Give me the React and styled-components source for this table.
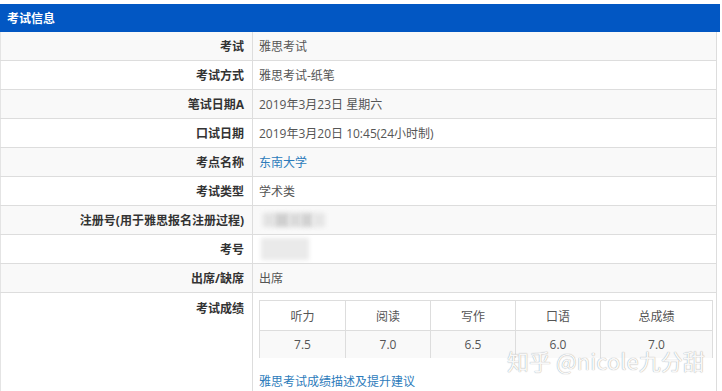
import React from "react"
import styled, { createGlobalStyle } from 'styled-components'

const GlobalStyle = createGlobalStyle`
  body {
    margin: 0;
    background: #fff;
    font-family: "Open Sans", "Noto Sans CJK SC", sans-serif;
    font-size: 12px;
  }
`

const Page = styled.div`
  padding-top: 4px;
  width: 722px;
  height: 387px;
  overflow: hidden;
  position: relative;
`

const PanelHeader = styled.div`
  height: 28px;
  width: 720px;
  background: #0257c3;
  color: #fff;
  font-weight: bold;
  display: flex;
  align-items: center;
  padding-left: 7px;
  box-sizing: border-box;
`

const InfoTable = styled.table`
  width: 717px;
  border-collapse: collapse;
  table-layout: fixed;
  border-left: 1px solid #e4e4e4;
  border-right: 1px solid #ddd;
`

const Row = styled.tr`
  background: ${p => p.$striped ? '#f9f9f9' : '#fff'};
  & + & {
    border-top: 1px solid #ddd;
  }
`

const Label = styled.th`
  width: 252px;
  height: 28px;
  padding: 0 8px 0 0;
  text-align: right;
  color: #333;
  font-weight: bold;
  vertical-align: ${p => p.$top ? 'top' : 'middle'};
  padding-top: ${p => p.$top ? '6px' : '0'};
  border-right: 1px solid #ddd;
  box-sizing: border-box;
`

const Value = styled.td`
  padding: 0 6px;
  color: #555;
  height: 28px;
`

const Link = styled.span`
  color: #2c7bbb;
`

const BlurRow = styled.div`
  display: flex;
  align-items: center;
`

const Blur = styled.div`
  width: ${p => p.$w}px;
  height: ${p => p.$h}px;
  background: ${p => p.$bg};
  filter: blur(2px);
  margin-left: ${p => p.$ml || 0}px;
`

const ScoreCell = styled.td`
  padding: 7px 3px 0 6px;
  vertical-align: top;
`

const ScoreTable = styled.table`
  width: 453px;
  border-collapse: collapse;
  table-layout: fixed;
  color: #555;
  text-align: center;
`

const ScoreHead = styled.td`
  height: 27px;
  border: 1px solid #ddd;
  background: #fff;
`

const ScoreNum = styled.td`
  height: 25px;
  border-left: 1px solid #ddd;
  border-right: 1px solid #ddd;
  background: #f9f9f9;
`

const AdviceLink = styled(Link)`
  display: block;
  margin-top: 14px;
  padding-bottom: 10px;
`

const Watermark = styled.div`
  position: absolute;
  left: 507px;
  top: 344px;
  font-size: 22px;
  color: rgba(255, 255, 255, 0.95);
  text-shadow: 0 0 1px #8a8a8a;
  font-family: "Noto Sans CJK SC", sans-serif;
  white-space: nowrap;
`

const rows = [
  ['考试', '雅思考试'],
  ['考试方式', '雅思考试-纸笔'],
  ['笔试日期A', '2019年3月23日 星期六'],
  ['口试日期', '2019年3月20日 10:45(24小时制)'],
  ['考点名称', <Link>东南大学</Link>],
  ['考试类型', '学术类'],
  ['注册号(用于雅思报名注册过程)', (
    <BlurRow>
      <Blur $w={12} $h={14} $bg="#e2e2e2" $ml={4} />
      <Blur $w={14} $h={14} $bg="#cfcfcf" />
      <Blur $w={12} $h={14} $bg="#dadada" />
      <Blur $w={12} $h={14} $bg="#d2d2d2" />
      <Blur $w={12} $h={14} $bg="#e6e6e6" />
    </BlurRow>
  )],
  ['考号', <Blur $w={48} $h={22} $bg="#eaeaea" $ml={2} />],
  ['出席/缺席', '出席'],
]

const heads = ['听力', '阅读', '写作', '口语', '总成绩']
const scores = ['7.5', '7.0', '6.5', '6.0', '7.0']
const widths = [86, 85, 85, 85, 112]

function App() {
  return (
    <Page>
      <GlobalStyle />
      <PanelHeader>考试信息</PanelHeader>
      <InfoTable>
        <tbody>
          {rows.map(([k, v], i) => (
            <Row key={k} $striped={i % 2 === 0}>
              <Label>{k}</Label>
              <Value>{v}</Value>
            </Row>
          ))}
          <Row>
            <Label $top>考试成绩</Label>
            <ScoreCell>
              <ScoreTable>
                <colgroup>
                  {widths.map((w, i) => <col key={i} style={{width: w}} />)}
                </colgroup>
                <tbody>
                  <tr>{heads.map(h => <ScoreHead key={h}>{h}</ScoreHead>)}</tr>
                  <tr>{scores.map((s, i) => <ScoreNum key={i}>{s}</ScoreNum>)}</tr>
                </tbody>
              </ScoreTable>
              <AdviceLink>雅思考试成绩描述及提升建议</AdviceLink>
            </ScoreCell>
          </Row>
        </tbody>
      </InfoTable>
      <Watermark>知乎 @nicole九分甜</Watermark>
    </Page>
  )
}

export default App
